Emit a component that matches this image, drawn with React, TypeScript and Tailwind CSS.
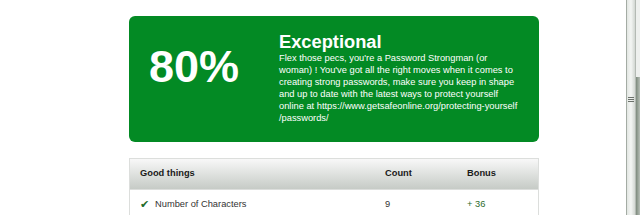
import type { JSX } from 'react'

const rows = [
  { label: 'Number of Characters', count: '9', bonus: '+ 36' },
]

function ScoreCard(): JSX.Element {
  return (
    <div className="flex h-[126px] w-[410px] rounded-[6px] bg-[#038a24] text-white">
      <div className="w-[150px] shrink-0 pl-[20px] pt-[28px]">
        <div className="text-[45px] font-bold leading-[45px]">80%</div>
      </div>
      <div className="w-[242px] pt-[16px]">
        <h2 className="text-[18.3px] font-bold leading-[20px]">Exceptional</h2>
        <p className="text-[9.3px] leading-[12px]">
          Flex those pecs, you're a Password Strongman (or woman) ! You've got all the right moves when it comes to
          creating strong passwords, make sure you keep in shape and up to date with the latest ways to protect yourself
          online at https://www.getsafeonline.org/protecting-yourself
          <br />
          /passwords/
        </p>
      </div>
    </div>
  )
}

function GoodThings(): JSX.Element {
  return (
    <div className="mt-[16px] w-[410px] border border-[#dcdedc] text-[9.3px]">
      <div className="grid h-[30px] grid-cols-[245px_82px_1fr] items-center bg-gradient-to-b from-[#f8f8f8] to-[#c6cbc6] font-bold text-[#1a1a1a]">
        <div className="pl-[10px]">Good things</div>
        <div className="pl-[10px]">Count</div>
        <div className="pl-[10px]">Bonus</div>
      </div>
      {rows.map((r) => (
        <div key={r.label} className="grid h-[30px] grid-cols-[245px_82px_1fr] items-center border-t border-[#dcdedc] text-[#333]">
          <div className="flex items-center gap-[6px] pl-[10px]">
            <span className="text-[11px] leading-none text-[#1f6b2a]">✔</span>
            <span>{r.label}</span>
          </div>
          <div className="pl-[10px]">{r.count}</div>
          <div className="pl-[10px] text-[#2e6b2e]">{r.bonus}</div>
        </div>
      ))}
    </div>
  )
}

function Scrollbar(): JSX.Element {
  return (
    <div className="flex h-[215px] w-[14px] shrink-0">
      <div className="w-px bg-[#a4aca4]" />
      <div className="flex w-[9px] flex-col items-center justify-start border-r border-[#b4bab4] bg-gradient-to-r from-[#e2e6e2] via-[#f4f6f4] to-[#d2d7d2] pt-[97px]">
        <div className="flex flex-col gap-[1px]">
          <div className="h-px w-[6px] bg-[#6b716b]" />
          <div className="h-px w-[6px] bg-[#6b716b]" />
          <div className="h-px w-[6px] bg-[#6b716b]" />
        </div>
      </div>
      <div className="flex w-[4px] flex-col">
        <div className="h-[77px] bg-[#eef0ee]" />
        <div className="flex-1 bg-gradient-to-r from-[#7d8a7d] to-[#b8c0b8]" />
      </div>
    </div>
  )
}

export default function App(): JSX.Element {
  return (
    <div className="flex h-[215px] w-[640px] overflow-hidden bg-white font-['Liberation_Sans',Arial,sans-serif]">
      <div className="flex-1 pl-[129px] pt-[16px]">
        <ScoreCard />
        <GoodThings />
      </div>
      <Scrollbar />
    </div>
  )
}
